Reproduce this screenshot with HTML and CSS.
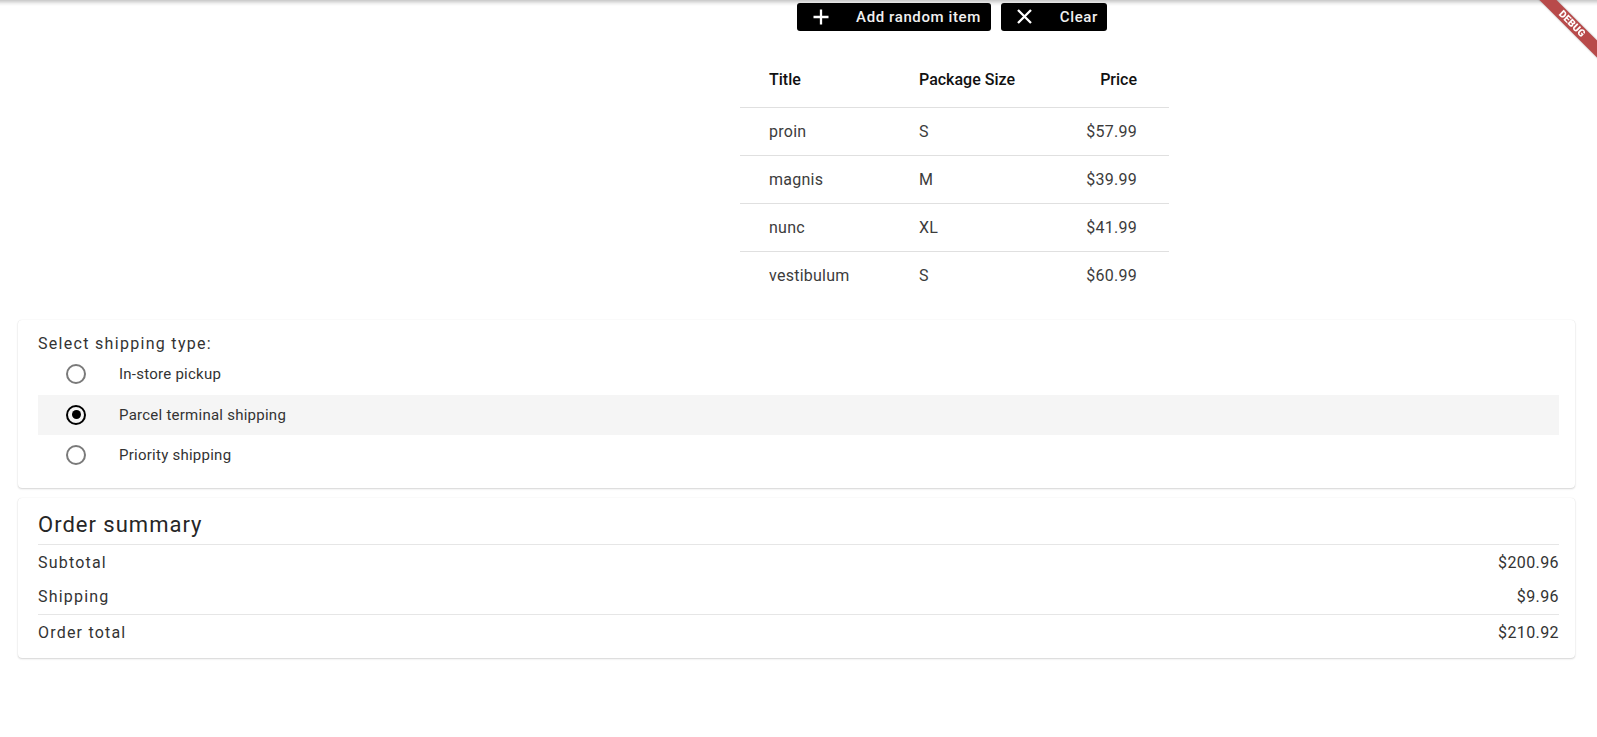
FILE: index.html
```html
<!DOCTYPE html>
<html lang="en">
<head>
<meta charset="utf-8">
<title>Order</title>
<link rel="stylesheet" href="styles.css">
</head>
<body>
<div class="topshade"></div>
<div class="banner-wrap"><div class="banner">DEBUG</div></div>
<main class="page">
  <section class="top">
    <div class="actions">
      <button class="btn btn-add">
        <svg class="ico" viewBox="0 0 18 18" aria-hidden="true"><path d="M9 1.5v15M1.5 9h15"/></svg>
        <span>Add random item</span>
      </button>
      <button class="btn btn-clear">
        <svg class="ico ico-x" viewBox="0 0 19 19" aria-hidden="true"><path d="M3 3l13 13M16 3L3 16"/></svg>
        <span>Clear</span>
      </button>
    </div>
    <div class="table">
      <div class="row head"><span>Title</span><span>Package Size</span><span class="num">Price</span></div>
      <div class="row"><span>proin</span><span>S</span><span class="num">$57.99</span></div>
      <div class="row"><span>magnis</span><span>M</span><span class="num">$39.99</span></div>
      <div class="row"><span>nunc</span><span>XL</span><span class="num">$41.99</span></div>
      <div class="row"><span>vestibulum</span><span>S</span><span class="num">$60.99</span></div>
    </div>
  </section>

  <section class="card shipping">
    <div class="card-label">Select shipping type:</div>
    <div class="option"><span class="radio"></span><span class="opt-text">In-store pickup</span></div>
    <div class="option selected"><span class="radio on"></span><span class="opt-text">Parcel terminal shipping</span></div>
    <div class="option"><span class="radio"></span><span class="opt-text">Priority shipping</span></div>
  </section>

  <section class="card summary">
    <div class="sum-title">Order summary</div>
    <div class="sum-row first"><span>Subtotal</span><span>$200.96</span></div>
    <div class="sum-row"><span>Shipping</span><span>$9.96</span></div>
    <div class="sum-row total"><span>Order total</span><span>$210.92</span></div>
  </section>
</main>
</body>
</html>
```
FILE: styles.css
```css
html, body {
  margin: 0;
  padding: 0;
  background: #ffffff;
  overflow: hidden;
}
body {
  font-family: Roboto, "Liberation Sans", Arial, sans-serif;
  color: #212121;
  width: 1597px;
  height: 737px;
}
.topshade {
  position: fixed;
  top: 0;
  left: 0;
  right: 0;
  height: 6px;
  background: linear-gradient(to bottom, rgba(0,0,0,0.22), rgba(0,0,0,0.06) 60%, rgba(0,0,0,0));
  z-index: 5;
  pointer-events: none;
}
.banner-wrap {
  position: fixed;
  top: 0;
  right: 0;
  width: 90px;
  height: 90px;
  overflow: hidden;
  pointer-events: none;
  z-index: 6;
}
.banner {
  position: absolute;
  top: 17.5px;
  right: -30px;
  width: 110px;
  height: 12px;
  transform: rotate(45deg);
  background: #b84a4a;
  box-shadow: 0 0 2px rgba(0,0,0,0.35);
  color: #ffffff;
  font-family: Roboto, "Liberation Sans", sans-serif;
  font-weight: 900;
  font-size: 10px;
  line-height: 12px;
  text-align: center;
  letter-spacing: 0.2px;
}

.page {
  display: flex;
  flex-direction: column;
}

.top {
  margin-left: 740px;
  width: 429px;
  display: flex;
  flex-direction: column;
  align-items: center;
}
.actions {
  display: flex;
  gap: 10px;
  margin-top: 3px;
  margin-left: -5px;
}
.btn {
  display: flex;
  align-items: center;
  height: 27.5px;
  padding: 0 10px 0 15px;
  border: none;
  border-radius: 3px;
  background: #000000;
  color: #f0f0f0;
  font-family: Roboto, "Liberation Sans", sans-serif;
  font-weight: 500;
  font-size: 15px;
  letter-spacing: 0.6px;
  gap: 26px;
  cursor: pointer;
}
.btn-clear {
  padding-left: 14px;
  padding-right: 9px;
}
.ico {
  width: 18px;
  height: 18px;
  fill: none;
  stroke: #ffffff;
  stroke-width: 2.3;
}
.ico-x {
  width: 19px;
  height: 19px;
}

.table {
  margin-top: 20.5px;
  width: 429px;
}
.row {
  display: grid;
  grid-template-columns: 150px 1fr 54px;
  align-items: center;
  height: 47px;
  padding: 0 32px 0 29px;
  border-top: 1px solid #e0e0e0;
  font-size: 16px;
  letter-spacing: 0.25px;
  color: #3c3c3c;
}
.row.head {
  height: 56px;
  border-top: none;
  font-weight: 500;
  letter-spacing: 0;
  color: #111111;
}
.num {
  text-align: right;
  white-space: nowrap;
}

.card {
  margin: 0 22px 0 18px;
  background: #ffffff;
  border-radius: 4px;
  box-shadow: 0 1px 2px rgba(0,0,0,0.16), 0 0 1px rgba(0,0,0,0.12);
}
.shipping {
  margin-top: 21px;
  padding: 13px 16px 12.5px 20px;
}
.card-label {
  font-size: 16px;
  letter-spacing: 1.3px;
  line-height: 21px;
  color: #333333;
}
.option {
  display: flex;
  align-items: center;
  height: 40.5px;
  padding-left: 28px;
  gap: 33px;
}
.option.selected {
  background: #f5f5f5;
}
.radio {
  box-sizing: border-box;
  width: 20px;
  height: 20px;
  border-radius: 50%;
  border: 2px solid #7a7a7a;
  display: flex;
  align-items: center;
  justify-content: center;
  flex: none;
}
.radio.on {
  border: 2.5px solid #000000;
}
.radio.on::after {
  content: "";
  width: 9px;
  height: 9px;
  border-radius: 50%;
  background: #000000;
}
.opt-text {
  font-size: 15px;
  letter-spacing: 0.25px;
  color: #333333;
}

.summary {
  margin-top: 10px;
  padding: 13px 16px 8px 20px;
}
.sum-title {
  font-size: 22px;
  letter-spacing: 1px;
  line-height: 28px;
  color: #262626;
  padding-bottom: 5px;
  border-bottom: 1px solid #e6e6e6;
}
.sum-row {
  display: flex;
  justify-content: space-between;
  align-items: center;
  height: 34.5px;
  font-size: 16px;
  letter-spacing: 1.2px;
  color: #333333;
}
.sum-row span:last-child {
  letter-spacing: 0.4px;
}
.sum-row.total {
  border-top: 1px solid #e6e6e6;
  height: 35px;
}
```
